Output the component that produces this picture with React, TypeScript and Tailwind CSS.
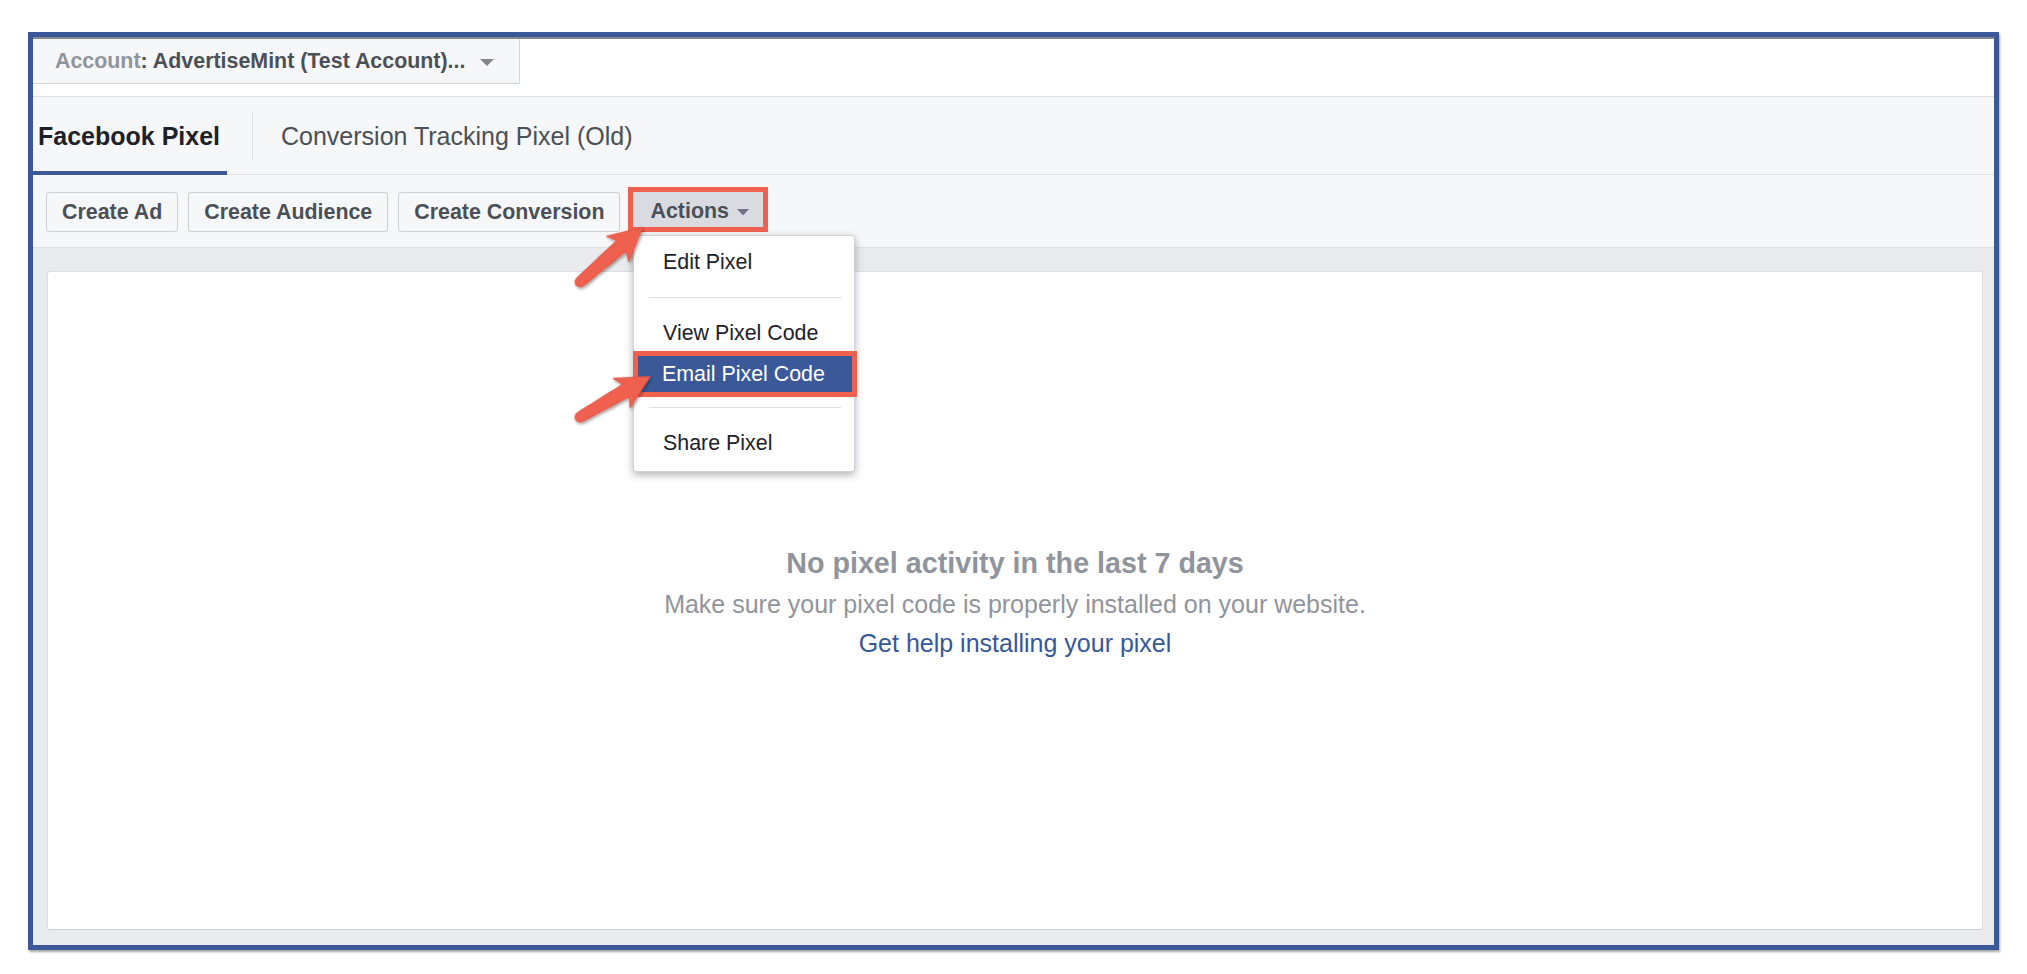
import React from "react";

function Arrow({ x, y, len, angle }: { x: number; y: number; len: number; angle: number }) {
  const L = len;
  const d = `M 0,-5 L ${L - 28},-7 L ${L - 33},-17 L ${L},0 L ${L - 33},17 L ${L - 28},7 L 0,5 A 5 5 0 0 1 0,-5 Z`;
  return (
    <g transform={`translate(${x},${y}) rotate(${angle})`}>
      <path d={d} fill="#f0604f" stroke="#e2503f" strokeWidth="1" strokeLinejoin="round" filter="url(#arrowShadow)" />
    </g>
  );
}

function Btn({ children }: { children: React.ReactNode }) {
  return (
    <div className="h-[40px] px-[15px] flex items-center border border-[#ccd0d5] rounded-[3px] bg-[#f6f7f9] text-[21.4px] font-bold text-[#4b4f56] whitespace-nowrap">
      {children}
    </div>
  );
}

export default function App() {
  return (
    <div className="relative w-[2027px] h-[974px] bg-white pl-[28px] pt-[32px] font-['Liberation_Sans',Arial,sans-serif]">
      <div className="w-[1971px] h-[918px] border-[5px] border-[#3b5998] flex flex-col shadow-[1px_2px_2px_rgba(0,0,0,0.35)]">
        <div className="h-[2px] bg-[#86888c]" />
        {/* Account row */}
        <div className="h-[58px] bg-white border-b border-[#dddfe2] flex items-start">
          <div className="h-[45px] w-[487px] bg-[#f6f7f9] border-r border-b border-[#d3d6db] rounded-br-[2px] flex items-center pl-[22px] pt-[1px]">
            <span className="text-[21.4px] font-bold whitespace-nowrap">
              <span className="text-[#90949c]">Account</span>
              <span className="text-[#4b4f56]">: AdvertiseMint (Test Account)...</span>
            </span>
            <svg className="ml-[15px] mt-[2px]" width="14" height="8" viewBox="0 0 14 8">
              <path d="M0,0 L14,0 L7,7 Z" fill="#7f8590" />
            </svg>
          </div>
        </div>
        {/* Tabs row */}
        <div className="h-[78px] bg-[#f6f7f9] border-b border-[#dddfe2] flex items-stretch">
          <div className="w-[194px] pl-[5px] pt-[6px] flex items-center border-b-4 border-[#3b5998] mb-[-1px] text-[25px] font-bold text-[#1d2129] whitespace-nowrap">
            Facebook Pixel
          </div>
          <div className="self-center ml-[25px] w-px h-[48px] bg-[#dddfe2]" />
          <div className="ml-[28px] pt-[2px] flex items-center text-[25px] text-[#4b4f56] whitespace-nowrap">
            Conversion Tracking Pixel (Old)
          </div>
        </div>
        {/* Toolbar */}
        <div className="h-[73px] bg-[#f6f7f9] border-b border-[#dddfe2] flex items-start pl-[13px] pt-[17px] gap-[10px]">
          <Btn>Create Ad</Btn>
          <Btn>Create Audience</Btn>
          <Btn>Create Conversion</Btn>
          <div className="ml-[-2px] mt-[-5px] w-[140px] h-[45px] border-[5px] border-[#f0604f] bg-[#d9dbe0] flex items-center pl-[17px] pt-[3px] text-[21.4px] font-bold text-[#4b4f56] whitespace-nowrap">
            Actions
            <svg className="ml-[8px] mt-[2px]" width="12" height="7" viewBox="0 0 12 7">
              <path d="M0,0 L12,0 L6,6.5 Z" fill="#6d7585" />
            </svg>
          </div>
        </div>
        {/* Content */}
        <div className="flex-1 bg-[#e9ebee] pl-[14px] pt-[23px] pr-[11px] pb-[15px] flex">
          <div className="flex-1 bg-white border border-[#dddfe2] border-b-[#ccd0d5] rounded-[3px] flex flex-col items-center justify-center pt-[4px]">
            <div className="text-[28.7px] leading-[36px] font-bold text-[#90949c] whitespace-nowrap">No pixel activity in the last 7 days</div>
            <div className="mt-[5px] text-[25px] leading-[36px] text-[#90949c] whitespace-nowrap">Make sure your pixel code is properly installed on your website.</div>
            <div className="mt-[4px] text-[25px] leading-[34px] text-[#365899] whitespace-nowrap">Get help installing your pixel</div>
          </div>
        </div>
      </div>

      {/* Dropdown menu */}
      <div className="absolute left-[633px] top-[235px] w-[222px] bg-white border border-[#cfd2d7] rounded-[3px] shadow-[0_3px_8px_rgba(0,0,0,0.3)] pt-[8px] pb-[10px] text-[21.4px] text-[#1d2129]">
        <div className="h-[36px] flex items-center pl-[29px] whitespace-nowrap">Edit Pixel</div>
        <div className="my-[17px] ml-[15px] mr-[13px] h-px bg-[#dddfe2]" />
        <div className="h-[36px] flex items-center pl-[29px] whitespace-nowrap">View Pixel Code</div>
        <div className="ml-[-1px] w-[224px] border-[5px] border-[#f0604f]">
          <div className="h-[36px] bg-[#3b5998] flex items-center pl-[24px] text-white whitespace-nowrap">Email Pixel Code</div>
        </div>
        <div className="mt-[10px] mb-[17px] ml-[15px] mr-[13px] h-px bg-[#dddfe2]" />
        <div className="h-[36px] flex items-center pl-[29px] whitespace-nowrap">Share Pixel</div>
      </div>

      {/* Annotation arrows */}
      <svg className="absolute left-0 top-0 pointer-events-none" width="2027" height="974" viewBox="0 0 2027 974">
        <defs>
          <filter id="arrowShadow" x="-30%" y="-30%" width="160%" height="160%">
            <feDropShadow dx="0" dy="2" stdDeviation="1.5" floodColor="#000" floodOpacity="0.4" />
          </filter>
        </defs>
        <Arrow x={580} y={282} len={83} angle={-41.2} />
        <Arrow x={580} y={417} len={81} angle={-30} />
      </svg>
    </div>
  );
}
